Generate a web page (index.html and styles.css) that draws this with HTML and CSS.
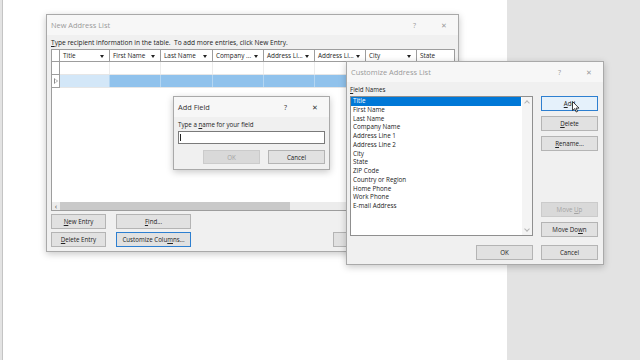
FILE: index.html
```html
<!DOCTYPE html>
<html lang="en">
<head>
    <meta charset="UTF-8">
    <title>Mail Merge - Customize Address List</title>
    <link rel="stylesheet" href="styles.css">
</head>
<body>

<div class="desk">
    <div class="page"></div>
</div>

<!-- New Address List -->
<div class="win win-nal">
    <div class="titlebar">
        <span class="title">New Address List</span>
        <span class="tb-btn">?</span>
        <span class="tb-btn tb-close">&#x2715;</span>
    </div>
    <div class="hint"><u>T</u>ype recipient information in the table.&nbsp; To add more entries, click New Entry.</div>
    <div class="grid">
        <div class="grid-head">
            <div class="rh"></div>
            <div class="hc">Title</div>
            <div class="hc">First Name</div>
            <div class="hc">Last Name</div>
            <div class="hc">Company ...</div>
            <div class="hc">Address Li...</div>
            <div class="hc">Address Li...</div>
            <div class="hc">City</div>
            <div class="hc hc-last">State</div>
        </div>
        <div class="grid-row">
            <div class="rh"></div>
            <div class="c"></div><div class="c"></div><div class="c"></div><div class="c"></div>
            <div class="c"></div><div class="c"></div><div class="c"></div><div class="c"></div>
        </div>
        <div class="grid-row row-sel">
            <div class="rh"><span class="rh-mark"></span></div>
            <div class="c c-cur"></div><div class="c"></div><div class="c"></div><div class="c"></div>
            <div class="c"></div><div class="c"></div><div class="c"></div><div class="c"></div>
        </div>
        <div class="grid-body"></div>
        <div class="hscroll">
            <span class="hs-arrow">&lsaquo;</span>
            <span class="hs-thumb"></span>
        </div>
    </div>
    <div class="nal-foot">
        <div class="btn-grid">
            <button class="btn"><u>N</u>ew Entry</button>
            <button class="btn btn-wide"><u>F</u>ind...</button>
            <button class="btn"><u>D</u>elete Entry</button>
            <button class="btn btn-wide btn-focus">Customize Colu<u>m</u>ns...</button>
        </div>
        <div class="nal-ok">
            <button class="btn btn-wide">OK</button>
            <button class="btn">Cancel</button>
        </div>
    </div>
</div>

<!-- Add Field -->
<div class="win win-add win-active">
    <div class="titlebar">
        <span class="title">Add Field</span>
        <span class="tb-btn">?</span>
        <span class="tb-btn tb-close">&#x2715;</span>
    </div>
    <div class="add-body">
        <div class="lbl">Type a <u>n</u>ame for your field</div>
        <div class="field"><span class="caret"></span></div>
        <div class="add-btns">
            <button class="btn btn-dis">OK</button>
            <button class="btn">Cancel</button>
        </div>
    </div>
</div>

<!-- Customize Address List -->
<div class="win win-cal">
    <div class="titlebar">
        <span class="title">Customize Address List</span>
        <span class="tb-btn">?</span>
        <span class="tb-btn tb-close">&#x2715;</span>
    </div>
    <div class="cal-body">
        <div class="lbl"><u>F</u>ield Names</div>
        <div class="cal-main">
            <div class="listbox">
                <ul class="items">
                    <li class="sel">Title</li>
                    <li>First Name</li>
                    <li>Last Name</li>
                    <li>Company Name</li>
                    <li>Address Line 1</li>
                    <li>Address Line 2</li>
                    <li>City</li>
                    <li>State</li>
                    <li>ZIP Code</li>
                    <li>Country or Region</li>
                    <li>Home Phone</li>
                    <li>Work Phone</li>
                    <li>E-mail Address</li>
                </ul>
                <div class="vscroll">
                    <span class="vs-up"></span>
                    <span class="vs-down"></span>
                </div>
            </div>
            <div class="side">
                <div class="side-grp">
                    <button class="btn btn-hover"><u>A</u>dd</button>
                    <button class="btn"><u>D</u>elete</button>
                    <button class="btn"><u>R</u>ename...</button>
                </div>
                <div class="side-grp">
                    <button class="btn btn-dis">Move <u>U</u>p</button>
                    <button class="btn">Move Do<u>w</u>n</button>
                </div>
            </div>
        </div>
        <div class="cal-foot">
            <button class="btn">OK</button>
            <button class="btn">Cancel</button>
        </div>
    </div>
</div>

<svg class="cursor" width="8" height="12" viewBox="0 0 8 12">
    <path d="M0.5 0.5 L0.5 9.5 L2.7 7.6 L4.2 11 L5.6 10.4 L4.1 7.1 L7 7.1 Z" fill="#fff" stroke="#111" stroke-width="0.8" stroke-linejoin="round"/>
</svg>

</body>
</html>
```

FILE: styles.css
```css
body {
    margin: 0;
    width: 640px;
    height: 360px;
    overflow: hidden;
    position: relative;
    font-family: 'Open Sans', 'Noto Sans', sans-serif;
    font-size: 6.2px;
    color: #222;
    background-color: #e3e3e3;
}
u {
    text-decoration: underline;
    text-underline-offset: 1px;
}
.desk {
    height: 360px;
    display: flex;
}
.page {
    width: 504px;
    height: 360px;
    margin-left: 2px;
    border-left: 1px solid #c4c4c4;
    background-color: #fff;
}

/* windows */
.win {
    position: absolute;
    box-sizing: border-box;
    background-color: #f0f0f0;
    border: 1px solid #a9a9a9;
    box-shadow: 0 2px 7px rgba(0, 0, 0, 0.22);
    display: flex;
    flex-direction: column;
}
.titlebar {
    height: 20px;
    flex: none;
    display: flex;
    align-items: center;
    padding-left: 4px;
    background-color: #f7f7f7;
}
.title {
    flex: 1;
    font-size: 7.4px;
    color: #9a9a9a;
}
.tb-btn {
    width: 29px;
    text-align: center;
    font-size: 7px;
    color: #9a9a9a;
}
.win-active .title,
.win-active .tb-btn {
    color: #333;
}

.btn {
    box-sizing: border-box;
    height: 15px;
    padding: 0;
    font-family: inherit;
    font-size: 6.2px;
    color: #222;
    background-color: #e1e1e1;
    border: 1px solid #b4b4b4;
}
.btn-focus {
    border-color: #2d7fd0;
}
.btn-hover {
    background-color: #e5f1fb;
    border-color: #2d7fd0;
}
.btn-dis {
    color: #a3a3a3;
    background-color: #d9d9d9;
    border-color: #cbcbcb;
}

/* New Address List */
.win-nal {
    left: 46px;
    top: 14px;
    width: 413px;
    height: 238px;
}
.hint {
    margin: 3px 0 0 4px;
    height: 9px;
    line-height: 9px;
    font-size: 6.6px;
    white-space: nowrap;
}
.grid {
    margin: 2px 3px 0 4px;
    height: 162px;
    box-sizing: border-box;
    border: 1px solid #9d9d9d;
    background-color: #fff;
    display: flex;
    flex-direction: column;
}
.grid-head,
.grid-row {
    display: grid;
    grid-template-columns: 8px 50px 51px 52px 51px 51px 51px 51px 1fr;
}
.grid-head {
    height: 11px;
    border-bottom: 1px solid #9d9d9d;
}
.rh {
    border-right: 1px solid #9d9d9d;
    position: relative;
}
.hc {
    position: relative;
    border-right: 1px solid #9d9d9d;
    padding-left: 3px;
    line-height: 11px;
    font-size: 6.4px;
    white-space: nowrap;
    overflow: hidden;
}
.hc-last {
    border-right: none;
}
.hc::after {
    content: "";
    position: absolute;
    right: 5px;
    top: 5px;
    border-left: 2.5px solid transparent;
    border-right: 2.5px solid transparent;
    border-top: 3px solid #222;
}
.hc-last::after {
    display: none;
}
.grid-row {
    height: 12px;
    border-bottom: 1px solid #e6e6e6;
}
.grid-row .rh {
    border-bottom: 1px solid #9d9d9d;
    margin-bottom: -1px;
}
.c {
    border-right: 1px solid #ececec;
}
.row-sel .c {
    background-color: #90c2ec;
    border-right-color: #b4d6f2;
}
.row-sel .c-cur {
    background-color: #d3e7f8;
}
.rh-mark {
    position: absolute;
    left: 2px;
    top: 3px;
    border-top: 3px solid transparent;
    border-bottom: 3px solid transparent;
    border-left: 4px solid #8a8a8a;
}
.rh-mark::after {
    content: "";
    position: absolute;
    left: -3.3px;
    top: -2px;
    border-top: 2px solid transparent;
    border-bottom: 2px solid transparent;
    border-left: 2.6px solid #fff;
}
.grid-body {
    flex: 1;
}
.hscroll {
    height: 8px;
    display: flex;
    align-items: center;
    background-color: #ececec;
}
.hs-arrow {
    width: 8px;
    text-align: center;
    font-size: 8px;
    line-height: 8px;
    color: #555;
}
.hs-thumb {
    width: 230px;
    height: 8px;
    background-color: #c9c9c9;
}
.nal-foot {
    display: flex;
    justify-content: space-between;
    margin: 3px 3px 0 4px;
}
.btn-grid {
    display: grid;
    grid-template-columns: 55px 75px;
    column-gap: 10px;
    row-gap: 3px;
}
.nal-ok {
    align-self: flex-end;
    display: flex;
    gap: 8px;
}
.nal-ok .btn {
    width: 57px;
}

/* Add Field */
.win-add {
    left: 173px;
    top: 96px;
    width: 157px;
    height: 74px;
}
.add-body {
    padding: 4px 4px 0 4px;
}
.lbl {
    height: 8px;
    line-height: 8px;
}
.field {
    margin-top: 2px;
    height: 13px;
    box-sizing: border-box;
    border: 1px solid #7a7a7a;
    background-color: #fff;
    padding: 2px 1px;
}
.caret {
    display: block;
    width: 1px;
    height: 7px;
    background-color: #222;
}
.add-btns {
    margin-top: 6px;
    display: flex;
    justify-content: flex-end;
    gap: 8px;
}
.add-btns .btn {
    width: 57px;
    height: 14px;
}

/* Customize Address List */
.win-cal {
    left: 346px;
    top: 61px;
    width: 258px;
    height: 204px;
}
.cal-body {
    padding: 4px 5px 0 3px;
}
.cal-main {
    margin-top: 2px;
    display: flex;
    gap: 8px;
}
.listbox {
    width: 183px;
    height: 140px;
    box-sizing: border-box;
    border: 1px solid #8f8f8f;
    background-color: #fff;
    display: flex;
}
.items {
    flex: 1;
    list-style: none;
    margin: 0;
    padding: 0;
    font-size: 6.3px;
}
.items li {
    height: 8.75px;
    line-height: 8.75px;
    padding-left: 2px;
}
.items li.sel {
    background-color: #0078d7;
    color: #fff;
}
.vscroll {
    width: 10px;
    position: relative;
    background-color: #f4f4f4;
    border-left: 1px solid #fff;
}
.vs-up,
.vs-down {
    position: absolute;
    left: 3px;
    width: 3px;
    height: 3px;
    border-left: 1px solid #b5b5b5;
    border-top: 1px solid #b5b5b5;
}
.vs-up {
    top: 4px;
    transform: rotate(45deg);
}
.vs-down {
    bottom: 4px;
    transform: rotate(225deg);
}
.side {
    width: 57px;
    height: 141px;
    display: flex;
    flex-direction: column;
    justify-content: space-between;
}
.side-grp {
    display: flex;
    flex-direction: column;
    gap: 5px;
}
.cal-foot {
    margin-top: 8px;
    display: flex;
    justify-content: flex-end;
    gap: 8px;
}
.cal-foot .btn {
    width: 57px;
}

.cursor {
    position: absolute;
    left: 572px;
    top: 101px;
}
```
